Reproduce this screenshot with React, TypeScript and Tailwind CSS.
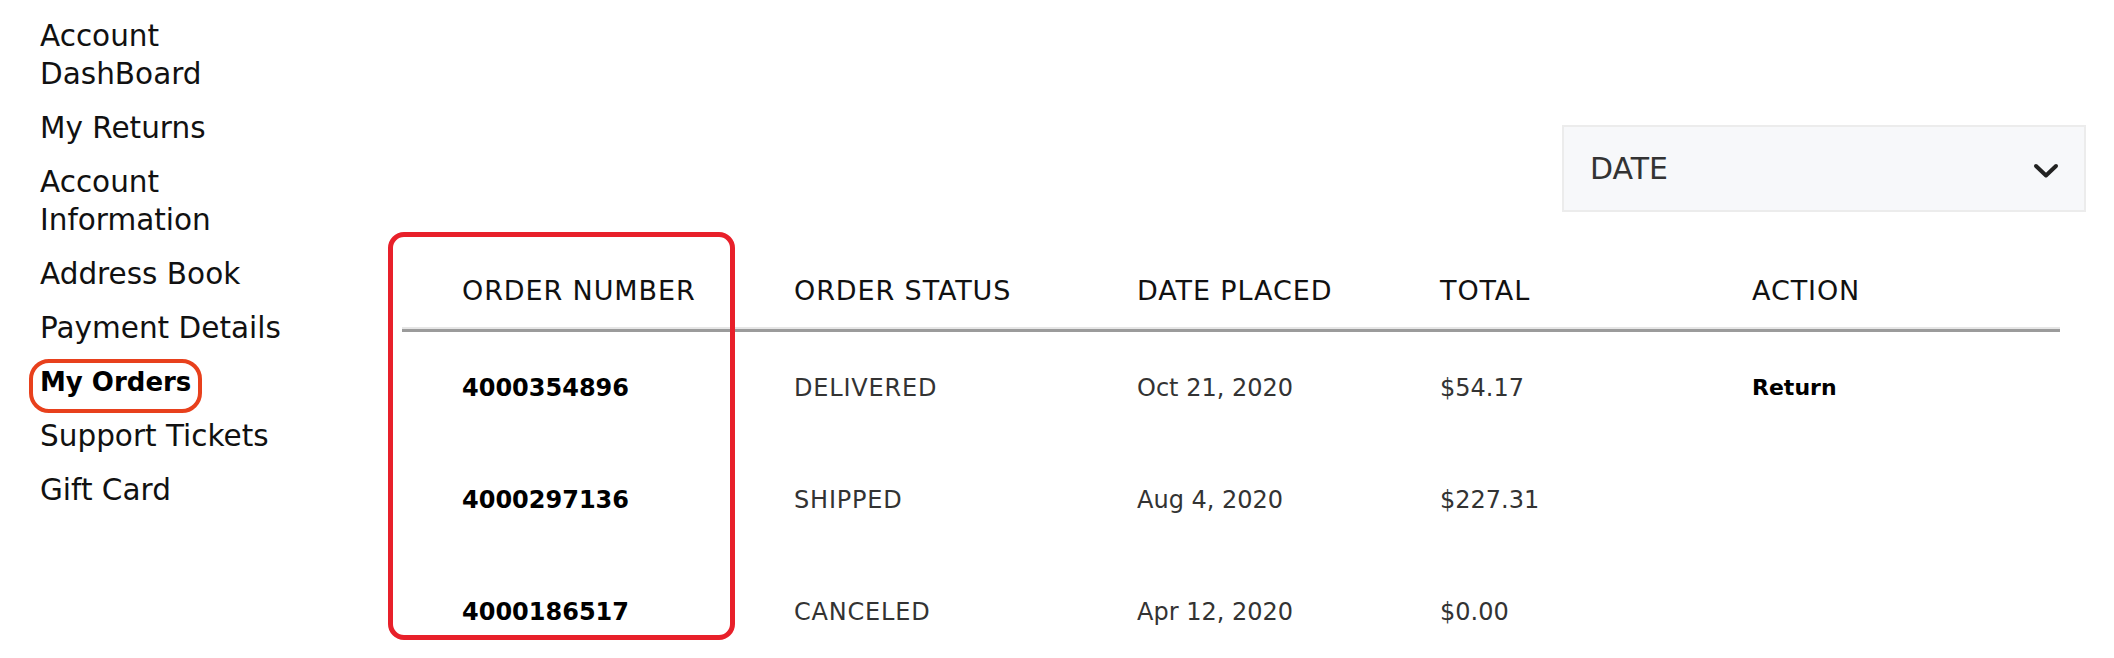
import React from "react";

const nav = [
  "Account DashBoard",
  "My Returns",
  "Account Information",
  "Address Book",
  "Payment Details",
  "My Orders",
  "Support Tickets",
  "Gift Card",
];

const orders = [
  { id: "4000354896", status: "DELIVERED", date: "Oct 21, 2020", total: "$54.17", action: "Return" },
  { id: "4000297136", status: "SHIPPED", date: "Aug 4, 2020", total: "$227.31", action: "" },
  { id: "4000186517", status: "CANCELED", date: "Apr 12, 2020", total: "$0.00", action: "" },
];

const cols = "grid grid-cols-[332px_343px_303px_312px_368px]";

export default function App() {
  return (
    <div className="w-[2114px] h-[658px] overflow-hidden bg-white font-['DejaVu_Sans',sans-serif] flex items-start">
      <aside className="w-[402px] shrink-0 pl-[40px] pt-[17px]">
        <ul className="w-[270px] flex flex-col gap-[16px] text-[29.5px] leading-[38px] text-[#111]">
          {nav.map((n) =>
            n === "My Orders" ? (
              <li key={n} className="relative font-bold text-[26px] text-black">
                <span>{n}</span>
                <span className="absolute left-[-11px] top-[-4px] w-[173px] h-[54px] rounded-[20px] border-[4px] border-[#e8401c] pointer-events-none" />
              </li>
            ) : (
              <li key={n}>{n}</li>
            )
          )}
        </ul>
      </aside>

      <main className="w-[1684px] pt-[125px]">
        <div className="flex justify-end">
          <div className="w-[524px] h-[87px] bg-[#f7f8fa] border-2 border-[#ececec] flex items-center justify-between pl-[26px] pr-[25px]">
            <span className="text-[30px] leading-[30px] text-[#333]">DATE</span>
            <svg width="26" height="16" viewBox="0 0 26 16" className="mt-[4px]">
              <polyline points="3,3 13,12.5 23,3" fill="none" stroke="#222" strokeWidth="4" strokeLinecap="round" strokeLinejoin="round" />
            </svg>
          </div>
        </div>

        <div className="relative w-[1658px] mt-[64px]">
          <div className={`${cols} text-[27px] leading-[30px] tracking-[0.9px] text-[#111]`}>
            <div className="pl-[60px]">ORDER NUMBER</div>
            <div className="pl-[60px]">ORDER STATUS</div>
            <div className="pl-[60px]">DATE PLACED</div>
            <div className="pl-[60px]">TOTAL</div>
            <div className="pl-[60px]">ACTION</div>
          </div>
          <div className="mt-[21px] h-[2px] bg-[#e6e6e6]" />
          <div className="h-[3px] bg-[#9b9b9b]" />

          {orders.map((o) => (
            <div key={o.id} className={`${cols} h-[112px] pt-[42px] last:h-auto text-[24px] leading-[28px]`}>
              <div className="pl-[60px] font-bold text-black">{o.id}</div>
              <div className="pl-[60px] text-[#333] tracking-[0.8px]">{o.status}</div>
              <div className="pl-[60px] text-[#333]">{o.date}</div>
              <div className="pl-[60px] text-[#333]">{o.total}</div>
              <div className="pl-[60px] font-bold text-black text-[22px]">{o.action}</div>
            </div>
          ))}

          <div className="absolute left-[-14px] top-[-44px] w-[347px] h-[408px] rounded-[16px] border-[5px] border-[#e8202a] pointer-events-none" />
        </div>
      </main>
    </div>
  );
}
